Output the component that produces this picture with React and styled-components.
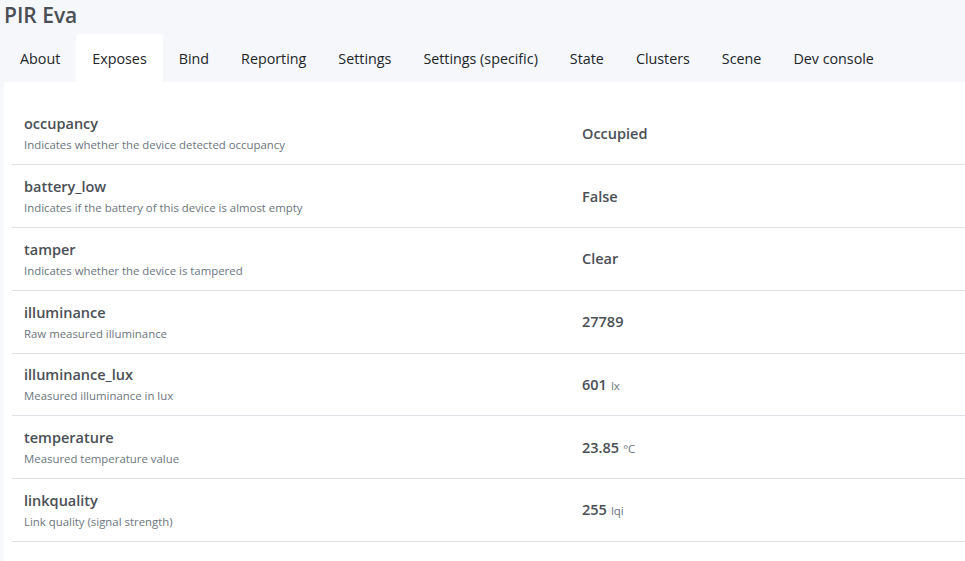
import React from "react";
import styled, { createGlobalStyle } from "styled-components";

const GlobalStyle = createGlobalStyle`
  html, body {
    margin: 0;
    padding: 0;
    background: #f6f7fb;
    font-family: "Open Sans", "Liberation Sans", sans-serif;
    overflow: hidden;
  }
`;

const tabs = [
  "About",
  "Exposes",
  "Bind",
  "Reporting",
  "Settings",
  "Settings (specific)",
  "State",
  "Clusters",
  "Scene",
  "Dev console",
];

const rows = [
  { name: "occupancy", desc: "Indicates whether the device detected occupancy", value: "Occupied" },
  { name: "battery_low", desc: "Indicates if the battery of this device is almost empty", value: "False" },
  { name: "tamper", desc: "Indicates whether the device is tampered", value: "Clear" },
  { name: "illuminance", desc: "Raw measured illuminance", value: "27789" },
  { name: "illuminance_lux", desc: "Measured illuminance in lux", value: "601", unit: "lx" },
  { name: "temperature", desc: "Measured temperature value", value: "23.85", unit: "°C" },
  { name: "linkquality", desc: "Link quality (signal strength)", value: "255", unit: "lqi" },
];

const App = () => {
  return (
    <Page>
      <GlobalStyle />
      <Title>PIR Eva</Title>
      <Tabs>
        {tabs.map((t) => (
          <Tab key={t} $active={t === "Exposes"}>
            {t}
          </Tab>
        ))}
      </Tabs>
      <Card>
        <Table>
          {rows.map((r) => (
            <Row key={r.name}>
              <NameCell>
                <Name>{r.name}</Name>
                <Desc>{r.desc}</Desc>
              </NameCell>
              <ValueCell>
                {r.value}
                {r.unit && <Unit>{r.unit}</Unit>}
              </ValueCell>
            </Row>
          ))}
        </Table>
      </Card>
    </Page>
  );
};
export default App;

const Page = styled.div`
  width: 965px;
  height: 561px;
  display: flex;
  flex-direction: column;
  padding-left: 4px;
  box-sizing: border-box;
`;
const Title = styled.div`
  height: 34px;
  font-size: 21px;
  font-weight: 600;
  color: #4a4f55;
  line-height: 30px;
`;
const Tabs = styled.div`
  display: flex;
  flex-direction: row;
  height: 48px;
`;
const Tab = styled.div`
  padding: 0 16px;
  display: flex;
  align-items: center;
  font-size: 14.3px;
  color: #212529;
  background: ${(p) => (p.$active ? "#ffffff" : "transparent")};
  border-radius: 3px 3px 0 0;
`;
const Card = styled.div`
  flex: 1;
  background: #ffffff;
  padding: 20.5px 0 0 8px;
`;
const Table = styled.div`
  display: flex;
  flex-direction: column;
`;
const Row = styled.div`
  display: grid;
  grid-template-columns: 558px 1fr;
  height: 62.75px;
  box-sizing: border-box;
  border-bottom: 1px solid #dee2e6;
  align-items: center;
`;
const NameCell = styled.div`
  padding: 0 12px;
  display: flex;
  flex-direction: column;
  gap: 4px;
`;
const Name = styled.div`
  font-size: 14.5px;
  font-weight: 600;
  color: #4a4f55;
`;
const Desc = styled.div`
  font-size: 11.4px;
  color: #6c757d;
`;
const ValueCell = styled.div`
  padding: 0 12px;
  font-size: 14.5px;
  font-weight: 600;
  color: #4a4f55;
`;
const Unit = styled.span`
  margin-left: 4px;
  font-size: 11.5px;
  font-weight: 400;
  color: #6c757d;
`;
